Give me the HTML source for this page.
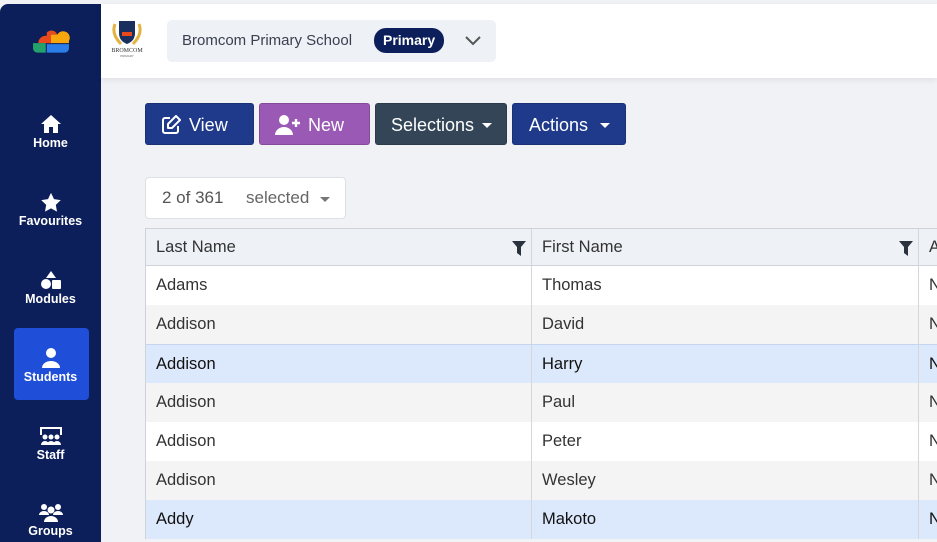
<!DOCTYPE html>
<html><head><style>
*{box-sizing:border-box;margin:0;padding:0}
body{width:937px;height:542px;overflow:hidden;background:#f0f2f6;font-family:"Liberation Sans",Arial,sans-serif;position:relative}
.sb{position:absolute;left:0;top:4px;width:101px;height:538px;background:#0c1f5a;border-top-left-radius:8px}
.hdr{position:absolute;left:101px;top:4px;right:0;height:74px;background:#fff;box-shadow:0 2px 6px rgba(0,0,0,.08)}
.nav{position:absolute;left:0;width:101px;text-align:center;color:#fff;font-weight:bold;font-size:12.5px}
.nav svg{display:block;margin:0 auto 2px}
.btn{position:absolute;top:103px;height:42px;border-radius:3px;color:#fff;font-size:18px;line-height:42px;border:1px solid rgba(0,0,0,.15)}
.tbl{position:absolute;left:145px;top:228px;width:800px}
.row{height:39px;display:flex;font-size:16.5px;color:#333;line-height:39px}
.row div{border-right:1px solid #d4d6da;padding-left:10px;flex:none}
.c1{width:387px}.c2{width:387px}.c3{width:30px}
</style></head><body>
<div class="sb">
 <svg style="position:absolute;left:32px;top:24px" width="38" height="26" viewBox="0 0 36 24"><path d="M6 14a7 7 0 0 1 7-7l0 0 5 0 0 7z" fill="#e8491d"/><path d="M14 4a6 6 0 0 1 10 2l-6 0 0 8-4 0z" fill="#e8491d"/><path d="M18 6h6a6 6 0 0 1 11 6v2H18z" fill="#f7a70b"/><path d="M1 14h12v9H5a4 4 0 0 1-4-4z" fill="#23a36b"/><path d="M14 15h21v4a4 4 0 0 1-4 4H14z" fill="#2b7de9"/></svg>
 <div class="nav" style="top:110px"><svg width="22" height="20" viewBox="0 0 22 20"><path d="M11 1 1 10h3v9h5v-6h4v6h5v-9h3z" fill="#fff"/></svg>Home</div>
 <div class="nav" style="top:188px"><svg width="22" height="20" viewBox="0 0 24 22"><path d="M12 1l3.3 6.9 7.4 1-5.4 5.2 1.3 7.5L12 18l-6.6 3.6 1.3-7.5L1.3 8.9l7.4-1z" fill="#fff"/></svg>Favourites</div>
 <div class="nav" style="top:266px"><svg width="22" height="20" viewBox="0 0 22 20"><path d="M11 1l5 7H6z" fill="#fff"/><circle cx="6" cy="14" r="5" fill="#fff"/><rect x="12" y="10" width="9" height="9" rx="1" fill="#fff"/></svg>Modules</div>
 <div style="position:absolute;left:14px;top:324px;width:75px;height:72px;background:#1f4fd8;border-radius:4px"></div>
 <div class="nav" style="top:344px"><svg width="22" height="20" viewBox="0 0 22 20"><circle cx="11" cy="5" r="5" fill="#fff"/><path d="M2 20a9 7 0 0 1 18 0z" fill="#fff"/></svg>Students</div>
 <div class="nav" style="top:422px"><svg width="24" height="20" viewBox="0 0 24 20"><path d="M2 9V2h20v7" fill="none" stroke="#fff" stroke-width="2"/><circle cx="6" cy="11" r="2.5" fill="#fff"/><circle cx="12" cy="11" r="2.5" fill="#fff"/><circle cx="18" cy="11" r="2.5" fill="#fff"/><path d="M2 19a4 4 0 0 1 8 0zM8 19a4 4 0 0 1 8 0zM14 19a4 4 0 0 1 8 0z" fill="#fff"/></svg>Staff</div>
 <div class="nav" style="top:498px"><svg width="26" height="20" viewBox="0 0 26 20"><circle cx="6" cy="5" r="3" fill="#fff"/><circle cx="20" cy="5" r="3" fill="#fff"/><circle cx="13" cy="8" r="3.5" fill="#fff"/><path d="M1 13a5 4 0 0 1 10 0zM15 13a5 4 0 0 1 10 0zM6 20a7 6 0 0 1 14 0z" fill="#fff"/></svg>Groups</div>
</div>
<div class="hdr">
 <svg style="position:absolute;left:8px;top:14px" width="36" height="44" viewBox="0 0 36 44"><path d="M6 6q-4 10 6 20M30 6q4 10-6 20" stroke="#e3b341" stroke-width="3" fill="none"/><path d="M10 3h16v12q0 8-8 11-8-3-8-11z" fill="#1a2f5e"/><path d="M13 14h10v4h-10z" fill="#e8491d"/><text x="18" y="34" font-size="6" text-anchor="middle" fill="#333" font-family="Liberation Serif">BROMCOM</text><text x="18" y="39" font-size="3" text-anchor="middle" fill="#666">PRIMARY</text></svg>
 <div style="position:absolute;left:66px;top:16px;width:329px;height:42px;background:#eef1f6;border-radius:5px">
  <span style="position:absolute;left:15px;top:12px;font-size:15px;color:#3a4050">Bromcom Primary School</span>
  <span style="position:absolute;left:207px;top:8px;height:25px;padding:0 9px;background:#0c1f5a;color:#fff;border-radius:12px;font-weight:bold;font-size:14px;line-height:25px">Primary</span>
  <svg style="position:absolute;left:298px;top:16px" width="16" height="10" viewBox="0 0 16 10"><path d="M1 1l7 7 7-7" stroke="#555" stroke-width="2" fill="none"/></svg>
 </div>
</div>
<div class="btn" style="left:145px;width:109px;background:#1f3a8a"><svg style="position:absolute;left:15px;top:11px" width="20" height="20" viewBox="0 0 20 20"><path d="M9 3H4a2 2 0 0 0-2 2v11a2 2 0 0 0 2 2h11a2 2 0 0 0 2-2v-5" stroke="#fff" stroke-width="2" fill="none"/><path d="M15 1l4 4-8 8H7V9z" stroke="#fff" stroke-width="2" fill="none" stroke-linejoin="round"/></svg><span style="position:absolute;left:43px">View</span></div>
<div class="btn" style="left:259px;width:111px;background:#9b59b6"><svg style="position:absolute;left:15px;top:11px" width="26" height="20" viewBox="0 0 26 20"><circle cx="9" cy="5" r="5" fill="#fff"/><path d="M0 20a9 8 0 0 1 18 0z" fill="#fff"/><path d="M21 4v8M17 8h8" stroke="#fff" stroke-width="2.4"/></svg><span style="position:absolute;left:48px">New</span></div>
<div class="btn" style="left:375px;width:132px;background:#344558"><span style="position:absolute;left:15px">Selections</span><svg style="position:absolute;left:106px;top:19px" width="10" height="6" viewBox="0 0 10 6"><path d="M0 0h10L5 5z" fill="#fff"/></svg></div>
<div class="btn" style="left:512px;width:114px;background:#1f3a8a"><span style="position:absolute;left:16px">Actions</span><svg style="position:absolute;left:87px;top:19px" width="10" height="6" viewBox="0 0 10 6"><path d="M0 0h10L5 5z" fill="#fff"/></svg></div>
<div style="position:absolute;left:145px;top:177px;width:201px;height:42px;background:#fff;border:1px solid #dde0e5;border-radius:4px;font-size:17px;color:#555;line-height:40px"><span style="position:absolute;left:16px">2 of 361</span><span style="position:absolute;left:100px;color:#666">selected</span><svg style="position:absolute;left:174px;top:19px" width="10" height="6" viewBox="0 0 10 6"><path d="M0 0h10L5 5z" fill="#777"/></svg></div>
<div class="tbl">
 <div class="row" style="background:#eef1f6;border:1px solid #cfd3d9;border-right:none;height:38px;line-height:37px;color:#333">
  <div class="c1" style="position:relative;width:386px">Last Name<svg style="position:absolute;right:5px;top:12px" width="14" height="15" viewBox="0 0 14 15"><path d="M0 0h14L9 6v9L5 12V6z" fill="#2a3240"/></svg></div>
  <div class="c2" style="position:relative">First Name<svg style="position:absolute;right:5px;top:12px" width="14" height="15" viewBox="0 0 14 15"><path d="M0 0h14L9 6v9L5 12V6z" fill="#2a3240"/></svg></div>
  <div class="c3">A</div>
 </div>
 <div style="border-left:1px solid #cfd3d9">
 <div class="row" style="background:#fff"><div class="c1" style="width:386px">Adams</div><div class="c2">Thomas</div><div class="c3">N</div></div>
 <div class="row" style="background:#f4f4f4"><div class="c1" style="width:386px">Addison</div><div class="c2">David</div><div class="c3">N</div></div>
 <div class="row" style="background:#dce8fb;color:#111;border-top:1px solid #c5d5ee"><div class="c1" style="width:386px">Addison</div><div class="c2">Harry</div><div class="c3">N</div></div>
 <div class="row" style="background:#f4f4f4"><div class="c1" style="width:386px">Addison</div><div class="c2">Paul</div><div class="c3">N</div></div>
 <div class="row" style="background:#fff"><div class="c1" style="width:386px">Addison</div><div class="c2">Peter</div><div class="c3">N</div></div>
 <div class="row" style="background:#f4f4f4"><div class="c1" style="width:386px">Addison</div><div class="c2">Wesley</div><div class="c3">N</div></div>
 <div class="row" style="background:#dce8fb;color:#111"><div class="c1" style="width:386px">Addy</div><div class="c2">Makoto</div><div class="c3">N</div></div>
 </div>
</div>
</body></html>
